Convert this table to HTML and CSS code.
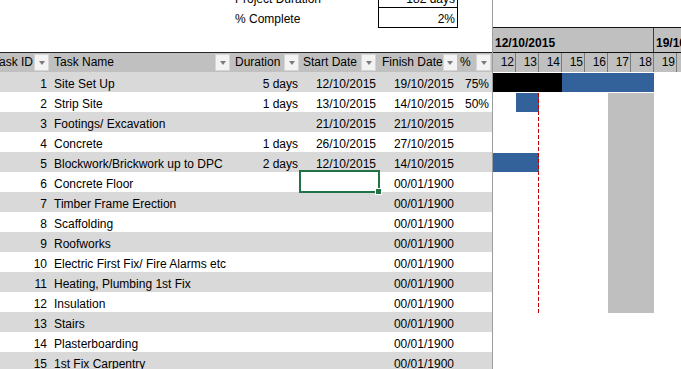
FILE: index.html
```html
<!DOCTYPE html>
<html>
<head>
<meta charset="utf-8">
<link rel="stylesheet" href="styles.css">
</head>
<body>
<div class="sheet">
  <div class="table-side">
    <div class="summary">
      <div class="sum-inner">
        <div class="sum-row"><span class="sum-label">Project Duration</span><span class="sum-val">182 days</span></div>
        <div class="sum-row"><span class="sum-label">% Complete</span><span class="sum-val">2%</span></div>
      </div>
    </div>
    <div class="thead">
      <div class="th c-id"><span class="th-text id-text">Task ID</span><span class="dd"></span></div>
      <div class="th c-name"><span class="th-text">Task Name</span><span class="dd"></span></div>
      <div class="th c-dur"><span class="th-text">Duration</span><span class="dd"></span></div>
      <div class="th c-start"><span class="th-text">Start Date</span><span class="dd"></span></div>
      <div class="th c-fin"><span class="th-text">Finish Date</span><span class="dd"></span></div>
      <div class="th c-pct"><span class="th-text">%</span><span class="dd"></span></div>
    </div>
    <div class="tr alt"><div class="td c-id">1</div><div class="td c-name">Site Set Up</div><div class="td c-dur">5 days</div><div class="td c-start">12/10/2015</div><div class="td c-fin">19/10/2015</div><div class="td c-pct">75%</div></div>
    <div class="tr"><div class="td c-id">2</div><div class="td c-name">Strip Site</div><div class="td c-dur">1 days</div><div class="td c-start">13/10/2015</div><div class="td c-fin">14/10/2015</div><div class="td c-pct">50%</div></div>
    <div class="tr alt"><div class="td c-id">3</div><div class="td c-name">Footings/ Excavation</div><div class="td c-dur"></div><div class="td c-start">21/10/2015</div><div class="td c-fin">21/10/2015</div><div class="td c-pct"></div></div>
    <div class="tr"><div class="td c-id">4</div><div class="td c-name">Concrete</div><div class="td c-dur">1 days</div><div class="td c-start">26/10/2015</div><div class="td c-fin">27/10/2015</div><div class="td c-pct"></div></div>
    <div class="tr alt"><div class="td c-id">5</div><div class="td c-name">Blockwork/Brickwork up to DPC</div><div class="td c-dur">2 days</div><div class="td c-start">12/10/2015</div><div class="td c-fin">14/10/2015</div><div class="td c-pct"></div></div>
    <div class="tr"><div class="td c-id">6</div><div class="td c-name">Concrete Floor</div><div class="td c-dur"></div><div class="td c-start"></div><div class="td c-fin">00/01/1900</div><div class="td c-pct"></div></div>
    <div class="tr alt"><div class="td c-id">7</div><div class="td c-name">Timber Frame Erection</div><div class="td c-dur"></div><div class="td c-start"></div><div class="td c-fin">00/01/1900</div><div class="td c-pct"></div></div>
    <div class="tr"><div class="td c-id">8</div><div class="td c-name">Scaffolding</div><div class="td c-dur"></div><div class="td c-start"></div><div class="td c-fin">00/01/1900</div><div class="td c-pct"></div></div>
    <div class="tr alt"><div class="td c-id">9</div><div class="td c-name">Roofworks</div><div class="td c-dur"></div><div class="td c-start"></div><div class="td c-fin">00/01/1900</div><div class="td c-pct"></div></div>
    <div class="tr"><div class="td c-id">10</div><div class="td c-name">Electric First Fix/ Fire Alarms etc</div><div class="td c-dur"></div><div class="td c-start"></div><div class="td c-fin">00/01/1900</div><div class="td c-pct"></div></div>
    <div class="tr alt"><div class="td c-id">11</div><div class="td c-name">Heating, Plumbing 1st Fix</div><div class="td c-dur"></div><div class="td c-start"></div><div class="td c-fin">00/01/1900</div><div class="td c-pct"></div></div>
    <div class="tr"><div class="td c-id">12</div><div class="td c-name">Insulation</div><div class="td c-dur"></div><div class="td c-start"></div><div class="td c-fin">00/01/1900</div><div class="td c-pct"></div></div>
    <div class="tr alt"><div class="td c-id">13</div><div class="td c-name">Stairs</div><div class="td c-dur"></div><div class="td c-start"></div><div class="td c-fin">00/01/1900</div><div class="td c-pct"></div></div>
    <div class="tr"><div class="td c-id">14</div><div class="td c-name">Plasterboarding</div><div class="td c-dur"></div><div class="td c-start"></div><div class="td c-fin">00/01/1900</div><div class="td c-pct"></div></div>
    <div class="tr alt"><div class="td c-id">15</div><div class="td c-name">1st Fix Carpentry</div><div class="td c-dur"></div><div class="td c-start"></div><div class="td c-fin">00/01/1900</div><div class="td c-pct"></div></div>
    <div class="selection"><span class="sel-handle"></span></div>
  </div>
  <div class="gantt">
    <div class="g-top"></div>
    <div class="g-week">
      <div class="week">12/10/2015</div>
      <div class="week">19/10/2015</div>
    </div>
    <div class="g-days">
      <div class="day">12</div><div class="day">13</div><div class="day">14</div><div class="day">15</div><div class="day">16</div><div class="day">17</div><div class="day">18</div><div class="day">19</div><div class="day">20</div>
    </div>
    <div class="g-body">
      <div class="weekend"></div>
      <div class="bar done r1 c1-4"></div>
      <div class="bar todo r1 c4-8"></div>
      <div class="bar todo r2 c2-3"></div>
      <div class="bar todo r5 c1-3"></div>
      <div class="today"></div>
    </div>
  </div>
</div>
</body>
</html>
```
FILE: styles.css
```css
body {
  margin: 0;
  font-family: "Liberation Sans", Arial, sans-serif;
  font-size: 12px;
  color: #000;
  background: #fff;
  overflow: hidden;
}

.sheet {
  display: flex;
  width: 681px;
  height: 369px;
  overflow: hidden;
}

.table-side {
  width: 492px;
  flex: none;
  position: relative;
}

/* summary block */
.summary {
  height: 52px;
  overflow: hidden;
}
.sum-inner {
  margin-top: -12px;
}
.sum-row {
  display: flex;
  height: 20px;
}
.sum-label {
  width: 143px;
  margin-left: 235px;
  box-sizing: border-box;
  padding-top: 3px;
  line-height: 16px;
}
.sum-val {
  width: 80px;
  height: 20px;
  box-sizing: border-box;
  border-left: 1px solid #000;
  border-right: 1px solid #000;
  border-bottom: 1px solid #000;
  text-align: right;
  padding-right: 2px;
  padding-top: 3px;
  line-height: 16px;
}

/* table header */
.thead {
  display: flex;
  height: 20px;
  box-sizing: border-box;
  border-top: 1px solid #262626;
  background: #c0c0c0;
}
.th {
  display: flex;
  align-items: center;
  justify-content: space-between;
  box-sizing: border-box;
  overflow: hidden;
  white-space: nowrap;
  line-height: 19px;
}
.th-text {
  padding-left: 4px;
}
.c-start .th-text { padding-left: 3px; }
.c-fin .th-text { padding-left: 5px; }
.c-pct .th-text { padding-left: 3px; }
.id-text {
  padding-left: 0;
  margin-left: -7px;
}
.dd {
  flex: none;
  width: 15px;
  height: 17px;
  margin-right: 1px;
  box-sizing: border-box;
  background: #f3f3f3;
  border: 1px solid #d6d6d6;
  display: flex;
  align-items: center;
  justify-content: center;
}
.dd::after {
  content: "";
  width: 0;
  height: 0;
  border-left: 3.5px solid transparent;
  border-right: 3.5px solid transparent;
  border-top: 4px solid #7b7b7b;
}

.c-id { width: 50px; }
.c-name { width: 181px; }
.c-dur { width: 69px; }
.c-start { width: 77px; }
.c-fin { width: 80px; }
.c-pct { width: 35px; }

/* data rows */
.tr {
  display: flex;
  height: 20px;
  box-sizing: border-box;
  padding-top: 4px;
  line-height: 16px;
}
.tr.alt {
  background: #d9d9d9;
}
.td {
  box-sizing: border-box;
  overflow: hidden;
  white-space: nowrap;
}
.td.c-id { text-align: right; padding-right: 3px; }
.td.c-name { padding-left: 4px; }
.td.c-dur { text-align: right; padding-right: 2px; }
.td.c-start { text-align: right; padding-right: 1px; }
.td.c-fin { text-align: right; padding-right: 3px; }
.td.c-pct { text-align: right; padding-right: 3px; }

/* selected cell */
.selection {
  position: absolute;
  left: 299px;
  top: 170px;
  width: 81px;
  height: 23px;
  box-sizing: border-box;
  border: 2px solid #217346;
}
.sel-handle {
  position: absolute;
  right: -4px;
  bottom: -4px;
  width: 5px;
  height: 5px;
  background: #217346;
  border: 1px solid #fff;
}

/* gantt */
.gantt {
  flex: 1;
  border-left: 1px solid #9c9c9c;
  overflow: hidden;
}
.g-top {
  height: 27px;
}
.g-week {
  display: flex;
  height: 25px;
  box-sizing: border-box;
  border-top: 1px solid #111;
  background: #c0c0c0;
}
.week {
  flex: none;
  width: 161px;
  box-sizing: border-box;
  border-right: 1px solid #3c3c3c;
  font-weight: bold;
  padding-left: 2px;
  padding-bottom: 2px;
  display: flex;
  align-items: flex-end;
  line-height: 14px;
  white-space: nowrap;
}
.g-days {
  display: grid;
  grid-template-columns: repeat(9, 23px);
  height: 20px;
  box-sizing: border-box;
  border-top: 1px solid #111;
  background: #c0c0c0;
}
.day {
  box-sizing: border-box;
  border-right: 1px solid #7a7a7a;
  text-align: right;
  padding-right: 1px;
  line-height: 19px;
}

.g-body {
  display: grid;
  grid-template-columns: repeat(9, 23px);
  grid-template-rows: repeat(15, 20px);
}
.bar {
  margin-top: 1px;
}
.done { background: #000; }
.todo { background: #336199; }
.r1 { grid-row: 1; }
.r2 { grid-row: 2; }
.r5 { grid-row: 5; }
.c1-4 { grid-column: 1 / 4; }
.c4-8 { grid-column: 4 / 8; }
.c2-3 { grid-column: 2 / 3; }
.c1-3 { grid-column: 1 / 3; }
.weekend {
  grid-row: 2 / 13;
  grid-column: 6 / 8;
  margin-top: 1px;
  margin-bottom: -1px;
  background: #bfbfbf;
}
.today {
  grid-row: 2 / 13;
  grid-column: 2 / 3;
  justify-self: end;
  width: 1px;
  margin-top: 1px;
  margin-bottom: -2px;
  background: repeating-linear-gradient(to bottom, #c00000 0 4px, transparent 4px 6px);
}
```
